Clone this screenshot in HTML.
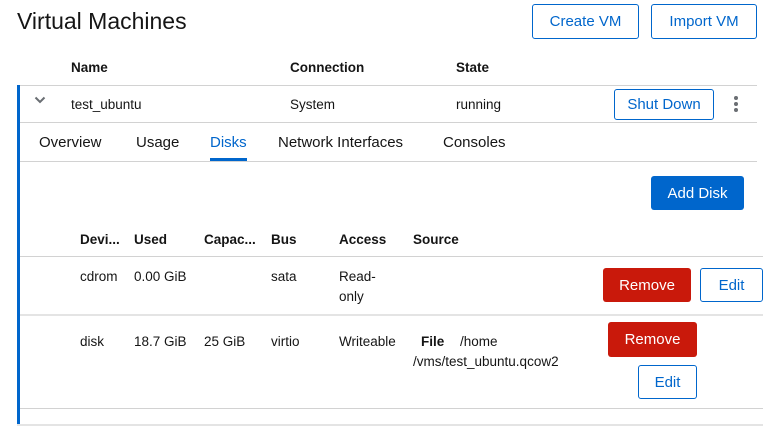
<!DOCTYPE html>
<html><head><style>
body{margin:0;width:768px;height:446px;background:#fff;font-family:"Liberation Sans",sans-serif;color:#151515;position:relative;overflow:hidden}
.a{position:absolute;white-space:nowrap}
.btn{position:absolute;box-sizing:border-box;border-radius:3px;display:flex;align-items:center;justify-content:center;font-size:15px}
.sec{border:1px solid #0066cc;color:#0066cc;background:#fff}
.pri{background:#0066cc;color:#fff}
.red{background:#c9190b;color:#fff}
.hl{position:absolute;height:1px;background:#d2d2d2}
.b{font-weight:bold;font-size:13.5px}
.t{font-size:13.5px}
</style></head><body>
<div class="a" style="left:17px;top:8px;font-size:23px;color:#151515">Virtual Machines</div>
<div class="btn sec" style="left:532px;top:4px;width:107px;height:35px">Create VM</div>
<div class="btn sec" style="left:651px;top:4px;width:106px;height:35px">Import VM</div>

<div class="a b" style="left:71px;top:60px">Name</div>
<div class="a b" style="left:290px;top:60px">Connection</div>
<div class="a b" style="left:456px;top:60px">State</div>
<div class="hl" style="left:17px;top:85px;width:740px"></div>
<div class="a" style="left:17px;top:85px;width:3px;height:341px;background:#0066cc"></div>
<svg class="a" style="left:34px;top:96px" width="12" height="8"><path d="M1.5 1.5 L6 6 L10.5 1.5" stroke="#6a6e73" stroke-width="2" fill="none"/></svg>
<div class="a t" style="left:71px;top:97px">test_ubuntu</div>
<div class="a t" style="left:290px;top:97px">System</div>
<div class="a t" style="left:456px;top:97px">running</div>
<div class="btn sec" style="left:614px;top:89px;width:100px;height:31px">Shut Down</div>
<svg class="a" style="left:732px;top:95px" width="8" height="20"><circle cx="4" cy="3" r="2" fill="#6a6e73"/><circle cx="4" cy="9" r="2" fill="#6a6e73"/><circle cx="4" cy="15" r="2" fill="#6a6e73"/></svg>
<div class="hl" style="left:20px;top:122px;width:737px"></div>

<div class="a" style="left:39px;top:134px;font-size:15px;color:#151515">Overview</div>
<div class="a" style="left:136px;top:134px;font-size:15px">Usage</div>
<div class="a" style="left:210px;top:134px;font-size:15px;color:#0066cc">Disks</div>
<div class="a" style="left:210px;top:158px;width:37px;height:3px;background:#0066cc"></div>
<div class="a" style="left:278px;top:134px;font-size:15px">Network Interfaces</div>
<div class="a" style="left:443px;top:134px;font-size:15px">Consoles</div>
<div class="hl" style="left:20px;top:161px;width:737px"></div>

<div class="btn pri" style="left:651px;top:176px;width:93px;height:34px">Add Disk</div>

<div class="a b" style="left:80px;top:232px">Devi...</div>
<div class="a b" style="left:134px;top:232px">Used</div>
<div class="a b" style="left:204px;top:232px">Capac...</div>
<div class="a b" style="left:271px;top:232px">Bus</div>
<div class="a b" style="left:339px;top:232px">Access</div>
<div class="a b" style="left:413px;top:232px">Source</div>
<div class="hl" style="left:20px;top:256px;width:743px"></div>

<div class="a t" style="left:80px;top:269px">cdrom</div>
<div class="a t" style="left:134px;top:269px">0.00 GiB</div>
<div class="a t" style="left:271px;top:269px">sata</div>
<div class="a t" style="left:339px;line-height:20px;top:267px">Read-<br>only</div>
<div class="btn red" style="left:603px;top:268px;width:88px;height:34px">Remove</div>
<div class="btn sec" style="left:700px;top:268px;width:63px;height:34px">Edit</div>
<div class="hl" style="left:20px;top:314px;width:743px;height:2px;background:#e4e4e4"></div>

<div class="a t" style="left:80px;top:334px">disk</div>
<div class="a t" style="left:134px;top:334px">18.7 GiB</div>
<div class="a t" style="left:204px;top:334px">25 GiB</div>
<div class="a t" style="left:271px;top:334px">virtio</div>
<div class="a t" style="left:339px;top:334px">Writeable</div>
<div class="a b" style="left:421px;top:334px">File</div>
<div class="a t" style="left:460px;top:334px">/home</div>
<div class="a t" style="left:413px;top:354px">/vms/test_ubuntu.qcow2</div>
<div class="btn red" style="left:608px;top:322px;width:89px;height:35px">Remove</div>
<div class="btn sec" style="left:638px;top:365px;width:59px;height:34px">Edit</div>
<div class="hl" style="left:20px;top:408px;width:743px"></div>
<div class="hl" style="left:17px;top:424px;width:746px;height:2px;background:#e4e4e4"></div>
</body></html>
